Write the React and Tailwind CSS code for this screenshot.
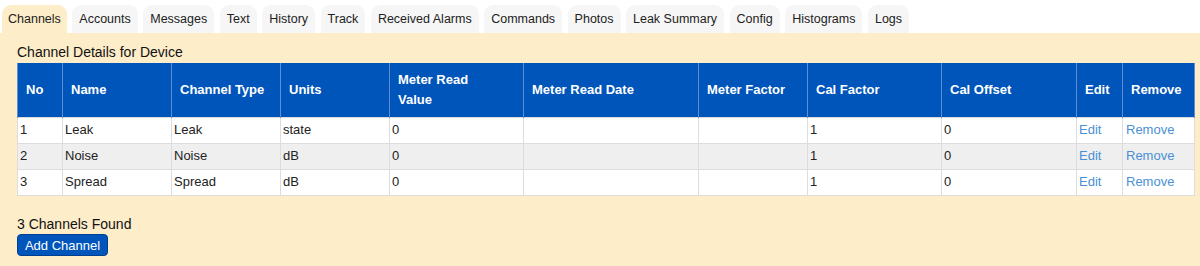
import React from 'react';

const tabs = [
  'Channels', 'Accounts', 'Messages', 'Text', 'History', 'Track', 'Received Alarms',
  'Commands', 'Photos', 'Leak Summary', 'Config', 'Histograms', 'Logs',
];

const columns = [
  { label: 'No', w: 'w-[45px]' },
  { label: 'Name', w: 'w-[109px]' },
  { label: 'Channel Type', w: 'w-[109px]' },
  { label: 'Units', w: 'w-[109px]' },
  { label: 'Meter Read Value', w: 'w-[134px]' },
  { label: 'Meter Read Date', w: 'w-[175px]' },
  { label: 'Meter Factor', w: 'w-[109px]' },
  { label: 'Cal Factor', w: 'w-[134px]' },
  { label: 'Cal Offset', w: 'w-[135px]' },
  { label: 'Edit', w: 'w-[46px]' },
  { label: 'Remove', w: 'w-[72px]' },
];

const channels = [
  { no: 1, name: 'Leak', type: 'Leak', units: 'state', value: '0', date: '', meter: '', cal: '1', offset: '0' },
  { no: 2, name: 'Noise', type: 'Noise', units: 'dB', value: '0', date: '', meter: '', cal: '1', offset: '0' },
  { no: 3, name: 'Spread', type: 'Spread', units: 'dB', value: '0', date: '', meter: '', cal: '1', offset: '0' },
];

const App = () => {
  return (
    <div className="w-[1200px] h-[266px] bg-white font-['Liberation_Sans',Arial,sans-serif] text-[#222] overflow-hidden">
      {/* Tabs */}
      <div className="flex items-end gap-[5.5px] pl-[2px] pt-[5px] h-[33px]">
        {tabs.map((t, i) => (
          <div
            key={t}
            className={
              i === 0
                ? 'h-[28px] px-[6px] flex items-center rounded-t-[9px] bg-[#feedc9] text-[12.5px] text-[#222]'
                : 'h-[28px] px-[7px] flex items-center rounded-t-[9px] bg-[#f6f6f6] text-[12.5px] text-[#222]'
            }
          >
            {t}
          </div>
        ))}
      </div>

      {/* Panel */}
      <div className="bg-[#feedc9] h-[233px] px-[17px] pt-[11px]">
        <div className="text-[14px] leading-[17px] text-[#111] mb-[2px]">Channel Details for Device</div>
        <table className="w-[1177px] border-collapse table-fixed text-[13px]">
          <thead>
            <tr className="bg-[#0055bb] h-[54px]">
              {columns.map((c) => (
                <th
                  key={c.label}
                  className={`${c.w} text-left align-middle font-bold text-white px-[8px] leading-[20px] border-l border-r border-[#5f8fd0] text-[13px]`}
                >
                  {c.label === 'Meter Read Value' ? (
                    <>Meter Read<br />Value</>
                  ) : (
                    c.label
                  )}
                </th>
              ))}
            </tr>
          </thead>
          <tbody>
            {channels.map((ch, i) => (
              <tr key={ch.no} className={`h-[26px] ${i % 2 === 1 ? 'bg-[#efefef]' : 'bg-white'}`}>
                {[ch.no, ch.name, ch.type, ch.units, ch.value, ch.date, ch.meter, ch.cal, ch.offset].map((v, j) => (
                  <td key={j} className="px-[2px] border border-[#dddddd] text-[#222] align-middle">{v}</td>
                ))}
                <td className="px-[2px] border border-[#dddddd] text-[#4a8fd6] align-middle">Edit</td>
                <td className="px-[3px] border border-[#dddddd] text-[#4a8fd6] align-middle">Remove</td>
              </tr>
            ))}
          </tbody>
        </table>

        <div className="mt-[20px] text-[14px] leading-[17px] text-[#111]">3 Channels Found</div>
        <button className="mt-[1px] h-[22px] w-[91px] rounded-[4px] bg-[#0055bb] border border-[#003f8f] text-white text-[13px] leading-none">
          Add Channel
        </button>
      </div>
    </div>
  );
};

export default App;
